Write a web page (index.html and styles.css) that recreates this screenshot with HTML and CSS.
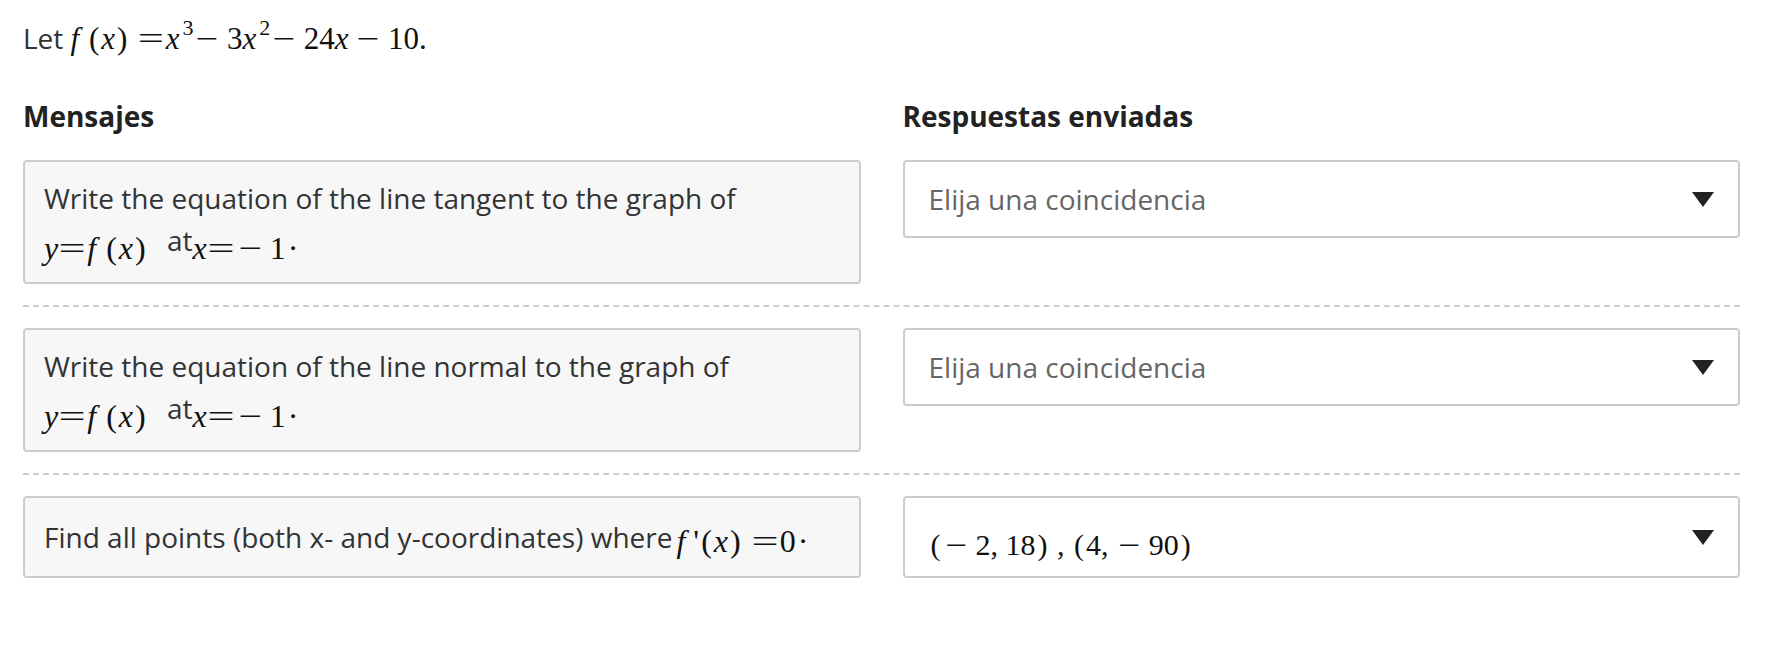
FILE: index.html
```html
<!DOCTYPE html>
<html lang="es">

<head>
  <meta charset="UTF-8" />
  <meta name="viewport" content="width=device-width, initial-scale=1.0" />
  <title>Relacionar</title>
  <link rel="stylesheet" href="styles.css">
</head>

<body>

  <!-- Enunciado -->
  <p class="enunciado">Let <span class="math grande"><i>f</i> <span class="par">(</span><i>x</i><span class="par">)</span> <span class="eq">=</span><i>x</i><sup>3</sup><span class="op">−</span>3<i>x</i><sup>2</sup><span class="op">−</span>24<i>x</i><span class="op suelto">−</span>10.</span></p>

  <div class="columnas">
    <h3 class="titulo">Mensajes</h3>
    <h3 class="titulo">Respuestas enviadas</h3>
  </div>

  <!-- Fila 1 -->
  <div class="fila">
    <div class="mensaje">
      Write the equation of the line tangent to the graph of<br>
      <span class="math baja"><i>y</i><span class="eq">=</span><i>f</i> <span class="par">(</span><i>x</i><span class="par">)</span></span>
      <span class="at">at</span><span class="math baja"><i>x</i><span class="eq">=</span><span class="op">−</span>1<span class="punto">·</span></span>
    </div>
    <div class="respuesta">
      <span class="placeholder">Elija una coincidencia</span>
      <svg class="flecha" width="22" height="15" viewBox="0 0 22 15"><polygon points="0,0 22,0 11,15" /></svg>
    </div>
  </div>

  <!-- Fila 2 -->
  <div class="fila">
    <div class="mensaje">
      Write the equation of the line normal to the graph of<br>
      <span class="math baja"><i>y</i><span class="eq">=</span><i>f</i> <span class="par">(</span><i>x</i><span class="par">)</span></span>
      <span class="at">at</span><span class="math baja"><i>x</i><span class="eq">=</span><span class="op">−</span>1<span class="punto">·</span></span>
    </div>
    <div class="respuesta">
      <span class="placeholder">Elija una coincidencia</span>
      <svg class="flecha" width="22" height="15" viewBox="0 0 22 15"><polygon points="0,0 22,0 11,15" /></svg>
    </div>
  </div>

  <!-- Fila 3 -->
  <div class="fila ultima">
    <div class="mensaje corto">
      Find all points (both x- and y-coordinates) where<span class="math media"><i>f</i> '<span class="par">(</span><i>x</i><span class="par">)</span> <span class="eq">=</span>0<span class="punto">·</span></span>
    </div>
    <div class="respuesta llena">
      <span class="valor math"><span class="par">(</span><span class="op">−</span>2, 18<span class="par">)</span> , <span class="par">(</span>4, <span class="op">−</span>90<span class="par">)</span></span>
      <svg class="flecha" width="22" height="15" viewBox="0 0 22 15"><polygon points="0,0 22,0 11,15" /></svg>
    </div>
  </div>

</body>

</html>
```

FILE: styles.css
```css
:root {
  --texto: #333;
  --borde: #cccccc;
  --fondo-mensaje: #f7f7f7;
}

* {
  box-sizing: border-box;
}

body {
  margin: 0;
  padding: 0 28px 0 23px;
  font-family: 'Open Sans', 'Noto Sans', sans-serif;
  font-size: 28px;
  line-height: 42px;
  color: var(--texto);
  background: #fff;
}

.enunciado {
  margin: 17px 0 0;
}

/* Fórmulas */
.math {
  font-family: 'Liberation Serif', 'Times New Roman', serif;
  font-size: 30px;
  line-height: 1;
  color: #111;
}

.math i {
  font-style: italic;
}

.math sup {
  font-size: 22px;
  vertical-align: 14px;
  line-height: 1;
  margin-left: 3px;
}

.grande {
  font-size: 31px;
}

.par {
  margin: 0 2px;
}

.eq {
  margin: 0 6px 0 5px;
  display: inline-block;
  transform: scaleX(1.5);
}

.op {
  margin: 0 11px 0 5px;
  display: inline-block;
  transform: scaleX(1.3);
}

.op.suelto {
  margin-left: 11px;
}

.punto {
  margin-left: 2px;
}

.baja {
  font-size: 32px;
  position: relative;
  top: 8px;
}

.media {
  font-size: 32px;
  position: relative;
  top: 4px;
  margin-left: 4px;
}

.at {
  margin-left: 12px;
}

/* Títulos de columnas */
.columnas {
  display: grid;
  grid-template-columns: 1fr 1fr;
  column-gap: 42px;
  margin-top: 36px;
}

.titulo {
  margin: 0;
  font-size: 28px;
  font-weight: 700;
  color: #222;
}

/* Filas */
.fila {
  display: grid;
  grid-template-columns: 1fr 1fr;
  column-gap: 42px;
  align-items: start;
  padding: 21px 0;
  border-bottom: 2px dashed var(--borde);
}

.columnas + .fila {
  padding-top: 23px;
}

.fila.ultima {
  border-bottom: none;
}

.mensaje {
  background-color: var(--fondo-mensaje);
  border: 2px solid var(--borde);
  border-radius: 4px;
  padding: 15px 19px 19px;
  min-height: 124px;
}

.mensaje.corto {
  min-height: 82px;
  padding: 18px 19px;
}

.respuesta {
  display: flex;
  justify-content: space-between;
  align-items: center;
  height: 78px;
  padding: 0 24px;
  background: #fff;
  border: 2px solid var(--borde);
  border-radius: 4px;
}

.respuesta.llena {
  height: 82px;
}

.placeholder {
  color: #666;
}

.valor {
  padding-top: 16px;
  line-height: 42px;
}

.flecha {
  display: block;
  fill: #222;
}
```
